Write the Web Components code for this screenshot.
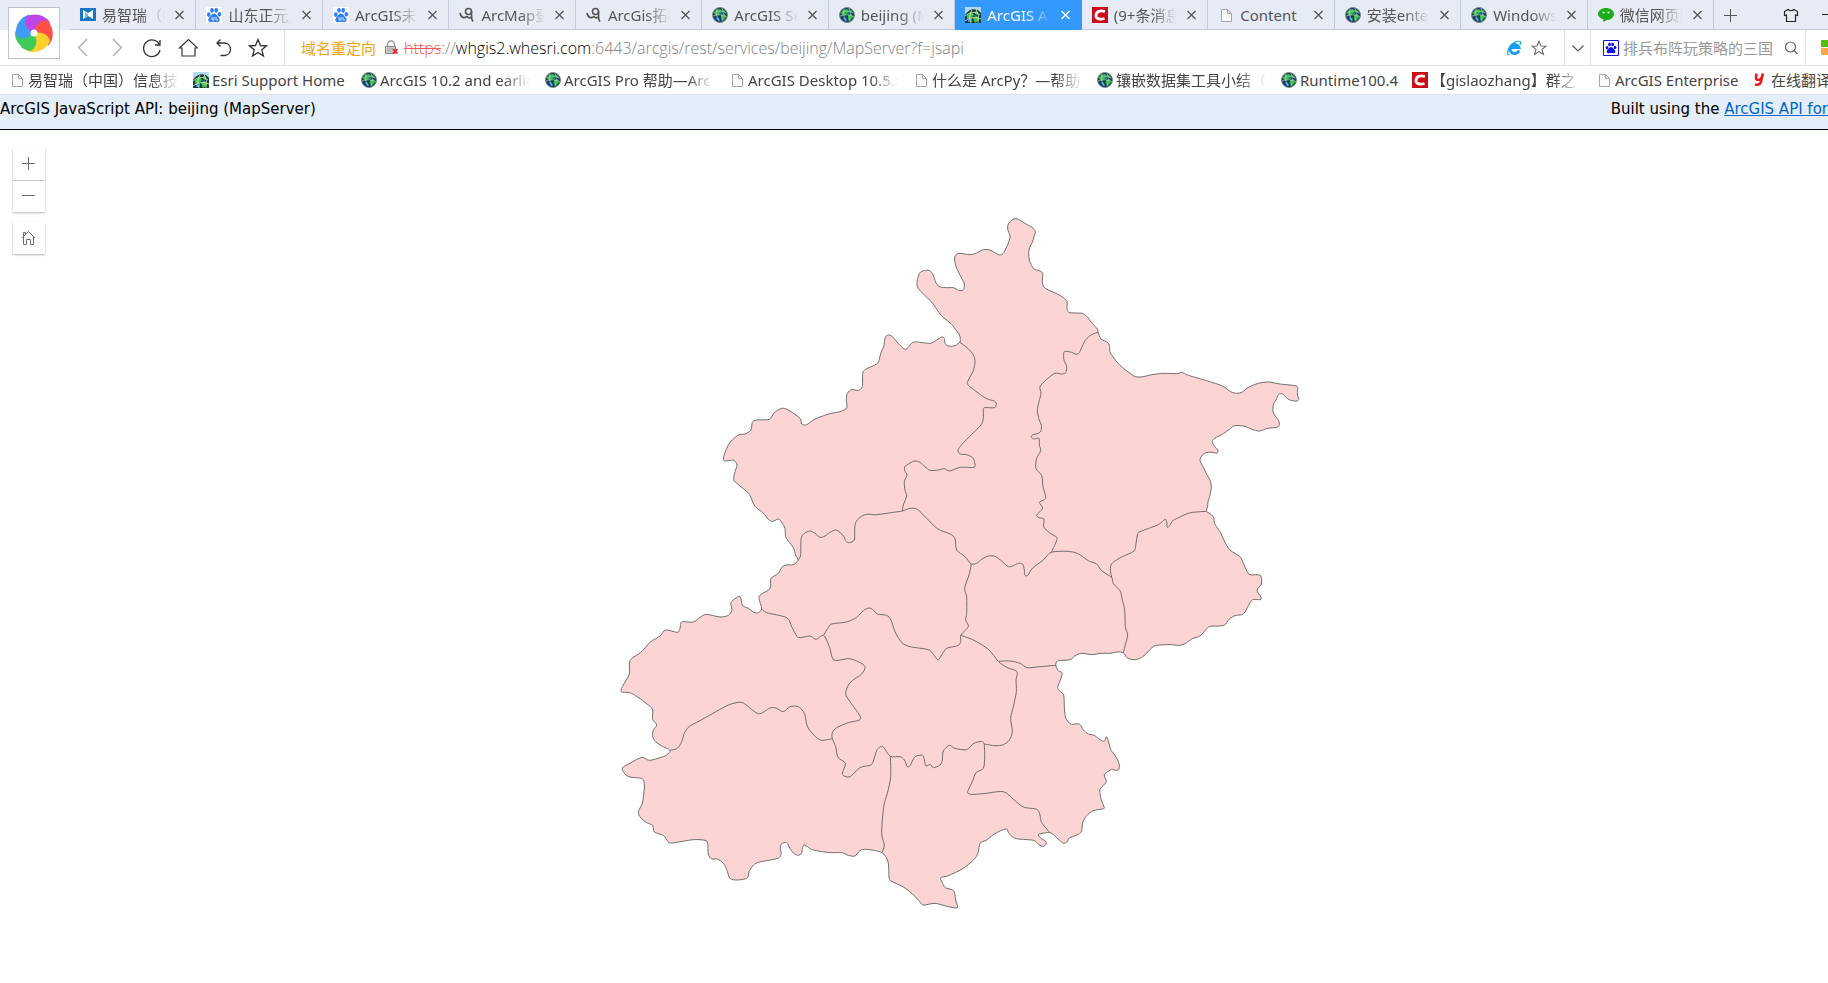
<!DOCTYPE html>
<html lang="zh-CN">
<head>
<meta charset="utf-8">
<title>ArcGIS JavaScript API: beijing (MapServer)</title>
<style>
html, body { height: 100%; margin: 0; }
body { overflow: hidden; background: #fff; }
</style>
</head>
<body>
<browser-window></browser-window>
<script>
const UI_FONT = '"Noto Sans", "Noto Sans CJK SC", sans-serif';
const define = (name, html, setup) => {
  const template = document.createElement('template');
  template.innerHTML = html;
  customElements.define(name, class extends HTMLElement {
    connectedCallback() {
      if (this.shadowRoot) return;
      const content = template.content.cloneNode(true);
      if (setup) setup(this, content);
      this.attachShadow({ mode: 'open' }).append(content);
    }
  });
};

const PAW = c => `<g fill="${c}"><ellipse cx="2.8" cy="7.6" rx="1.8" ry="2.3"/><ellipse cx="6" cy="3.2" rx="1.8" ry="2.5"/><ellipse cx="10.2" cy="3.2" rx="1.8" ry="2.5"/><ellipse cx="13.4" cy="7.2" rx="1.8" ry="2.3"/><path d="M8 6.600c2 0 2.600 1.700 4 3.100 1.800 1.700 2.200 3.300 1.200 4.600-1.300 1.500-3.300.5-5.200.5s-3.900 1-5.200-.5c-1-1.300-.6-2.900 1.200-4.600C5.400 8.300 6 6.600 8 6.600z"/></g>`;
const PETAL = 'M20 20C13 17 9 10 12 4C20-1 32 2 36 10C36 14 30 18 20 20z';
const ICONS = {
  logo: ['0 0 40 40', [[-144, '#3ecb5a'], [-72, '#3f9bf5'], [0, '#bd45ea'], [72, '#ff4f47'], [144, '#fdd02b']].map(([a, c]) =>
    `<path transform="rotate(${a} 20 20)" d="${PETAL}" fill="${c}"/>`).join('') +
    '<path transform="rotate(-144 20 20)" d="M20 20C13 17 9 10 12 4C16 1 19 1 22 1C24 8 22 14 20 20z" fill="#3ecb5a"/><circle cx="20" cy="20" r="3.500" fill="#fff"/>'],
  mlogo: ['0 0 16 16', '<path fill="#1975c5" d="M0 1h16v13H0z"/><path fill="#fff" d="M3 3l5 3 5-3v9l-5-3-5 3z"/><path fill="#6bc3ee" d="M5 5l3 2v2L5 11z"/>'],
  baidu: ['0 0 16 16', '<path fill="#fff" d="M0 0h16v16H0z"/>' + PAW('#2f80f5') + '<path d="M6 10v3h2v-3m2 0v3h2" stroke="#fff" fill="none" stroke-width=".8"/>'],
  baidubox: ['0 0 16 16', '<path fill="#fff" stroke="#1010e8" d="M.5.5h15v15H.5z"/><g transform="translate(2 2) scale(.75)">' + PAW('#1010e8') + '</g>'],
  swirl: ['0 0 16 16', '<path d="M1 6c1 5 5 6 7 3" fill="none" stroke="#555" stroke-width="1.700"/><circle cx="9.500" cy="4.500" r="3" fill="none" stroke="#555" stroke-width="1.600"/><path d="M12.500 4c.5 4-1 7.500 1.500 10.500M12.500 10c-2 1.500-4 1-4.500-1" fill="none" stroke="#555" stroke-width="1.600"/>'],
  globe: ['0 0 16 16', '<circle cx="8" cy="8" r="7.500" fill="#17405c" stroke="#7c898b"/><path d="M4 3l4-1 2 2-3 4-3 1-2-3zM9 8l4-1 1 3-3 4-2-2zM10 2l3 2 1 2-3-1z" fill="#2fba3d"/><path d="M4 10l3 1 1 3-3-1zM8 5l2 1-1 2z" fill="#2f8af0"/><path d="M2 6q6-4 12 0M1 9q7-3 14 1M5 2q-2 6 2 12M10 1q3 6 0 13" fill="none" stroke="#b9dbc8" stroke-width=".6"/>'],
  esri: ['0 0 16 16', '<path fill="#b4d9f2" d="M0 0h16v16H0z"/><path d="M0 15V8q5-8 13-5l3 3v10H0z" fill="#123e38"/><path d="M2 8l5-3 2 3-3 3-4 1zM10 4l3 1v3l-3-1zM8 11l4-2 2 4-4 3z" fill="#42c946"/><path d="M3 12l4-1v4H3zM9 8l4 1-3 1z" fill="#2895d5"/><path d="M0 9Q8 2 15 8M0 14q8-6 16-2M7 3Q3 9 6 16M11 2q4 6 2 14" fill="none" stroke="#d8e9bd" stroke-width=".8"/>'],
  csdn: ['0 0 16 16', '<path fill="#ca0c16" d="M0 0h16v16H0z"/><path d="M13 4.500C8 3 4.500 4.500 4 8s3 5 8.500 3.500" fill="none" stroke="#fff" stroke-width="2.800"/>'],
  page: ['0 0 16 16', '<path d="M3.500 2.500h6l4 4v8h-10zM9.500 2.500v4h4" fill="#fafafa" stroke="#a6a6a6"/>'],
  wechat: ['0 0 16 16', '<path fill="#1aad19" d="M8 1c4.500 0 8 2.700 8 6s-3.500 6-7 6L5 15l.5-2.500C2 11.500 0 9.500 0 7c0-3.300 3.500-6 8-6z"/><circle cx="5.500" cy="5.500" r="1.100" fill="#fff"/><circle cx="10.500" cy="5.500" r="1.100" fill="#fff"/>'],
  youdao: ['0 0 16 16', '<path d="M4.500 1.500L4 5.500Q4 8 6.500 8Q9 8 10 5L11 1.500M10.500 3L9 10Q8 13.500 3 12.500" fill="none" stroke="#e81c24" stroke-width="2.600"/>'],
  close: ['0 0 16 16', '<path d="M4.500 4l8 8M12.500 4l-8 8" fill="none" stroke="currentColor" stroke-width="1.300"/>'],
  plus: ['0 0 16 16', '<path d="M8.500 2v13M2 8.500h13" fill="none" stroke="#555"/>'],
  shirt: ['0 0 16 16', '<path d="M5 2.500L1.500 4.500v4l2-.5v6.500h9V8l2 .5v-4L11 2.500Q8 5 5 2.500z" fill="none" stroke="#222" stroke-width="1.200"/>'],
  back: ['0 0 20 20', '<path d="M14 1L5.500 9.500 14 18" fill="none" stroke="#aaa" stroke-width="1.200"/>'],
  forward: ['0 0 20 20', '<path d="M5 1l8.500 8.500L5 18" fill="none" stroke="#aaa" stroke-width="1.200"/>'],
  reload: ['0 0 20 20', '<path d="M17 2v5h-5M16.500 7A8.300 8.300 0 1 0 17 12" fill="none" stroke="#333" stroke-width="1.300"/>'],
  home: ['0 0 20 20', '<path d="M1.500 10L10.500 1.500l9 8.500h-2.500v8h-13v-8z" fill="none" stroke="#333" stroke-width="1.200"/>'],
  undo: ['0 0 20 20', '<path d="M7.500 1.500L4 5 7.500 8.500M4.500 5H12a6.300 6.300 0 0 1 0 12.500H7.500" fill="none" stroke="#333" stroke-width="1.300"/>'],
  star: ['0 0 20 20', '<path d="M10 1.500l2.500 6 6 .3-4.700 4 1.700 6.200-5.500-3.500L4.500 18l1.700-6.200-4.700-4 6-.3z" fill="none" stroke="currentColor" stroke-width="1.300"/>'],
  lock: ['0 0 16 16', '<path d="M3.500 7V4.500a3.500 3.500 0 0 1 7 0V7" fill="none" stroke="#999" stroke-width="1.500"/><path d="M1.500 6.500h10v7h-10z" fill="#ccc" stroke="#888"/><path d="M3 9h6M3 11h6" stroke="#aaa"/><path d="M9 9l4.500 4.500M13.500 9L9 13.500" stroke="#e81818" stroke-width="1.600"/>'],
  ie: ['0 0 16 16', '<path d="M12 10.500A4.600 4.600 0 1 1 12 7.500H4" fill="none" stroke="#109cf0" stroke-width="2.800"/><path d="M2.500 15Q-1 15 2 8Q7 0 13 1.500Q14 2 13 5" fill="none" stroke="#109cf0" stroke-width="1.200"/>'],
  chevron: ['0 0 16 16', '<path d="M2.500 5.500L8 11l5.500-5.500" fill="none" stroke="#555" stroke-width="1.100"/>'],
  search: ['0 0 16 16', '<circle cx="7.500" cy="7" r="5" fill="none" stroke="#666" stroke-width="1.200"/><path d="M11 10.500l3.500 3.500" stroke="#666" stroke-width="1.200"/>'],
  tiles: ['0 0 14 16', '<path fill="#55bf0d" d="M0 0h7v7H0z"/><path fill="#f9a647" d="M0 8h7v7H0z"/><path fill="#47a6f9" d="M8 0h6v7H8z"/><path fill="#f6d33b" d="M8 8h6v7H8z"/>'],
  zoomin: ['0 0 16 16', '<path d="M7.500 1v13M1 7.500h13" stroke="#6e6e6e" fill="none"/>'],
  zoomout: ['0 0 16 16', '<path d="M1 6.500h13" stroke="#6e6e6e" fill="none"/>'],
  house: ['0 0 16 16', '<path d="M1 8L7.500 1.500l6.500 6.500M2.500 7v7.500h3v-5h4v5h3V7M2.500 6V2.500h2V4" stroke="#6e6e6e" fill="none"/>']
};

define('ui-icon', `<style>:host{display:block;flex:none;width:16px;height:16px}svg{display:block;width:100%;height:100%}</style><svg aria-hidden="true"></svg>`, (host, root) => {
  const [box, body] = ICONS[host.getAttribute('name')];
  const svg = root.querySelector('svg');
  svg.setAttribute('viewBox', box);
  svg.innerHTML = body;
});

define('browser-tab', `<style>
:host{display:flex;flex:1 1 0;min-width:0;box-sizing:border-box;align-items:center;height:30px;padding:0 8px 0 10px;gap:6px;border-right:1px solid #c5cad8;border-bottom:1px solid #c5cad8;color:#555}
:host([active]){background:#3399ff;border-color:#3399ff;color:#fff}
a{flex:1 1 0;min-width:0;overflow:hidden;white-space:nowrap;color:inherit;text-decoration:none;line-height:24px;-webkit-mask-image:linear-gradient(90deg,#000 60%,transparent);mask-image:linear-gradient(90deg,#000 60%,transparent)}
:host([plain]) a{-webkit-mask-image:none;mask-image:none}
button{flex:none;width:16px;height:16px;padding:0;border:0;background:none;color:inherit}
</style><ui-icon></ui-icon><a href="#"><slot></slot></a><button aria-label="关闭"><ui-icon name="close"></ui-icon></button>`,
(host, root) => root.querySelector('ui-icon').setAttribute('name', host.getAttribute('icon')));

define('tab-strip', `<style>
:host{display:flex;height:30px;background:#e7ebf5}
nav{display:flex;flex:1;min-width:0;padding-left:70px}
.end{display:flex;flex:none;box-sizing:border-box;width:114px;align-items:center;padding-left:8px;border-bottom:1px solid #c5cad8;overflow:hidden}
button{flex:none;padding:0;border:0;background:none}
.skin{margin-left:45px}
.min{width:16px;height:1px;margin-left:23px;background:#222}
</style><nav>
<browser-tab icon="mlogo">易智瑞（中</browser-tab><browser-tab icon="baidu">山东正元_</browser-tab><browser-tab icon="baidu">ArcGIS未来</browser-tab><browser-tab icon="swirl">ArcMap登</browser-tab><browser-tab icon="swirl">ArcGis拓扑</browser-tab><browser-tab icon="globe">ArcGIS Se</browser-tab><browser-tab icon="globe">beijing (M</browser-tab><browser-tab icon="esri" active>ArcGIS A</browser-tab><browser-tab icon="csdn">(9+条消息</browser-tab><browser-tab icon="page" plain>Content</browser-tab><browser-tab icon="globe">安装enter</browser-tab><browser-tab icon="globe">Windows</browser-tab><browser-tab icon="wechat">微信网页版</browser-tab>
</nav><div class="end"><button aria-label="新标签页"><ui-icon name="plus"></ui-icon></button><button class="skin" aria-label="皮肤"><ui-icon name="shirt"></ui-icon></button><button class="min" aria-label="最小化"></button></div>`);

define('address-bar', `<style>
:host{display:flex;box-sizing:border-box;height:36px;background:#fff;border-bottom:1px solid #e2e2e2;color:#808080;overflow:hidden}
nav{display:flex;flex:none;box-sizing:border-box;width:285px;padding-left:73px;gap:15px;align-items:center;border-right:1px solid #e2e2e2}
button{display:block;flex:none;padding:0;border:0;background:none;color:#333}
nav ui-icon{width:20px;height:20px}
.url{display:flex;flex:1;min-width:0;align-items:center;padding:0 17px 0 16px;gap:8px}
.tag{color:#f0a30a;white-space:nowrap}
.text{flex:1;min-width:0;white-space:nowrap;overflow:hidden;outline:0;margin-left:-4px;font:300 16px/24px "Open Sans","Noto Sans",sans-serif}
s{color:#f55}b{font-weight:inherit;color:#000}
.fav{color:#666}
.drop{display:flex;flex:none;box-sizing:border-box;width:27px;justify-content:center;align-items:center;border:solid #e2e2e2;border-width:0 1px}
form{display:flex;flex:none;box-sizing:border-box;width:215px;align-items:center;margin:0;padding:0 6px 0 12px;gap:4px;border-right:1px solid #e2e2e2}
input{flex:1;min-width:0;border:0;padding:0;outline:0;font:inherit;background:none}
input::placeholder{color:#999;opacity:1}
.apps{flex:none;width:22px;overflow:hidden;padding-left:15px;box-sizing:border-box;align-self:center}
.apps ui-icon{width:14px}
</style><nav>
<button aria-label="后退"><ui-icon name="back"></ui-icon></button><button aria-label="前进"><ui-icon name="forward"></ui-icon></button><button aria-label="刷新"><ui-icon name="reload"></ui-icon></button><button aria-label="主页"><ui-icon name="home"></ui-icon></button><button aria-label="恢复"><ui-icon name="undo"></ui-icon></button><button aria-label="收藏"><ui-icon name="star"></ui-icon></button></nav>
<div class="url"><span class="tag">域名重定向</span><ui-icon name="lock"></ui-icon><div class="text" role="textbox" aria-label="地址"><s>https</s>://<b>whgis2.whesri.com</b>:6443/arcgis/rest/services/beijing/MapServer?f=jsapi</div><button aria-label="内核"><ui-icon name="ie"></ui-icon></button><button class="fav" aria-label="收藏此页"><ui-icon name="star"></ui-icon></button></div>
<button class="drop" aria-label="展开"><ui-icon name="chevron"></ui-icon></button>
<form><ui-icon name="baidubox"></ui-icon><input aria-label="搜索" placeholder="排兵布阵玩策略的三国"><button type="button" aria-label="搜索"><ui-icon name="search"></ui-icon></button></form>
<div class="apps"><ui-icon name="tiles"></ui-icon></div>`);

define('book-mark', `<style>
:host{display:flex;flex:none;width:184px;box-sizing:border-box;align-items:center;gap:3px;padding-right:8px;color:#444}
:host([size=m]){width:168px;padding-right:4px}:host([size=s]){width:131px;padding-right:0}:host([size=l]){width:156px;padding-right:0}
a{flex:1 1 0;min-width:0;overflow:hidden;white-space:nowrap;color:inherit;text-decoration:none;line-height:24px}
:host([fade]) a{-webkit-mask-image:linear-gradient(90deg,#000 78%,transparent 96%);mask-image:linear-gradient(90deg,#000 78%,transparent 96%)}
</style><ui-icon></ui-icon><a href="#"><slot></slot></a>`,
(host, root) => root.querySelector('ui-icon').setAttribute('name', host.getAttribute('icon')));

define('bookmarks-bar', `<style>
:host{display:flex;box-sizing:border-box;height:29px;padding-left:9px;background:#fff;border-bottom:1px solid #e2e2e2;overflow:hidden}
</style>
<book-mark icon="page" fade>易智瑞（中国）信息技</book-mark><book-mark icon="esri" size="m">Esri Support Home</book-mark><book-mark icon="globe" fade>ArcGIS 10.2 and earlie</book-mark><book-mark icon="globe" fade>ArcGIS Pro 帮助—Arc</book-mark><book-mark icon="page" fade>ArcGIS Desktop 10.5.x</book-mark><book-mark icon="page" fade>什么是 ArcPy？—帮助</book-mark><book-mark icon="globe" fade>镶嵌数据集工具小结（-</book-mark><book-mark icon="globe" size="s">Runtime100.4</book-mark><book-mark icon="csdn" fade>【gislaozhang】群之</book-mark><book-mark icon="page" size="l">ArcGIS Enterprise</book-mark><book-mark icon="youdao">在线翻译</book-mark>`);

define('page-header', `<style>
:host{display:flex;box-sizing:border-box;height:35px;justify-content:space-between;background:#e4eef8;border-bottom:1px solid #000;color:#000;font:15px/28px "DejaVu Sans",sans-serif;white-space:nowrap;overflow:hidden}
a{color:#0066cc}
</style><span>ArcGIS JavaScript API: beijing (MapServer)</span><span>Built using the <a href="#">ArcGIS API for</a></span>`);

const SHEETS = { A: [840, 200], B: [700, 320], C: [600, 500], D: [940, 480] };
const OUTLINE = [
['A', '360,426 361,415 357,402 347,389 338,376 322,362 307,350 296,336 277,309 262,293 247,279 233,262 231,248 235,228 242,216 257,211 271,213 279,225 285,241 291,254 301,261 320,263 340,263 356,271 368,271 373,262 372,248 365,235 357,219 350,205 345,188 344,173 349,163 360,160 390,164 410,159 430,149 450,150 463,157 478,165 489,161 497,147 504,132 509,117 510,105 504,92 503,78 510,65 522,57 535,58 560,73 576,82 586,95 582,110 577,127 569,142 566,160 568,180 575,197 583,208 600,213 608,221 607,245 611,260 625,270 650,281 670,293 681,305 681,325 686,337 705,339 727,340 740,349 757,370 772,387 775,398 783,417 804,428 809,443 811,458 830,485 850,505 869,519 886,530 910,530 935,524 970,520 1010,521 1027,517 1042,525 1090,539 1145,557 1172,575 1190,580 1207,576 1225,562 1255,550 1285,546 1320,552 1365,557 1373,563 1372,582 1376,598 1370,603 1352,601 1340,594 1328,582 1316,583 1308,600 1300,613 1299,635 1306,648 1316,662 1318,676 1310,682 1283,685 1258,693 1236,688 1215,679 1185,677 1168,688 1150,701 1125,714 1117,724 1122,737 1134,750 1131,759 1115,757 1098,758 1085,768 1080,782 1090,802 1100,823 1110,840 1114,860 1110,885 1104,905 1103,920 1100,934'],
['D', '820,110 824,131 841,157 853,183 870,210 900,230 910,250 920,272 930,284 961,286 964,312 951,330 963,352 960,359 938,359 925,377 915,396 905,404 885,407 867,418 852,436 812,439 800,446 780,468 757,476 735,491 718,496 690,494 650,496 635,504 612,527 595,537 577,539 560,532 550,518 530,516 510,520 480,520 457,524 425,520 405,527 390,539 355,542 348,549 348,560 355,572 366,578 364,592 358,608 353,623 360,634 371,645 373,680 376,710 385,726 395,733 418,732 430,750 445,762 463,766 478,778 490,784 495,781 498,770 503,777 512,808 522,822 533,840 538,855 536,869 525,871 515,868 493,884 499,905 481,926 480,940 484,960 491,978 491,986 460,992 440,1007 428,1028 425,1053 415,1063 388,1074 382,1085 372,1090 362,1084 350,1073 330,1058 296,1063 302,1074 317,1084 317,1094 309,1099 297,1094 280,1081 235,1077 217,1070 205,1057 200,1047 180,1053 160,1064 140,1080 120,1090 115,1115 105,1135 70,1165 25,1187'],
['C', '1022,1133 1028,1150 1036,1163 1058,1170 1064,1180 1067,1200 1072,1223 1045,1220 1005,1210 970,1215 955,1200 930,1175 905,1158 873,1143 867,1130 864,1085 846,1058 800,1048 780,1052 765,1068 745,1066 725,1058 690,1058 640,1050 625,1042 613,1035 607,1045 605,1060 593,1066 580,1059 570,1045 560,1028 545,1031 541,1045 543,1062 533,1075 475,1087 458,1098 447,1115 442,1134 412,1140 390,1135 380,1108 370,1090 352,1077 335,1077 325,1062 323,1030 315,1021 280,1019 215,1029 203,1023 190,1006 163,996 158,976 140,968 122,953 115,935 127,910 132,875 133,855 127,836 90,831 75,822 67,804 90,790 125,772 148,781 180,773 200,765 210,751 185,738 167,725 158,710 160,690 170,675 158,658 158,630 145,615 95,580 65,576 67,560 88,522 90,482 125,455 150,427 180,408 197,390 232,397 240,385 242,370 250,365 280,366 300,352 320,343 360,351 385,346 396,330 392,310 400,300 418,289 423,297 428,317 445,325 462,337 475,338 485,326 477,295 483,283 510,266 513,235 533,222 545,203 557,195 580,194'],
['B', '294,721 287,705 280,683 268,667 257,650 255,625 247,610 236,597 218,604 205,598 190,579 165,559 150,527 140,514 107,487 101,475 105,455 111,435 103,422 90,421 73,423 71,410 80,385 92,365 115,345 135,342 153,330 157,307 170,300 208,298 222,279 245,265 265,270 300,295 305,312 320,314 345,297 390,281 420,275 440,264 439,240 442,220 455,209 475,211 487,200 488,160 497,148 530,132 538,118 542,100 551,80 556,52 565,45 577,50 600,76 615,88 625,82 642,66 690,70 710,60 725,51 733,55 735,70 745,78 765,77 780,66']];
const BORDERS = [
['B', '779,67 800,82 817,100 825,122 820,152 805,180 803,193 820,208 858,235 883,243 889,253 883,263 855,263 850,268 850,295 843,315 815,343 785,374 774,390 780,402 800,404 818,413 824,428 822,442 780,442 750,453 732,446 715,450 690,451 675,440 660,427 645,423 630,429 614,441 615,454 621,465 613,485 615,510 620,528 610,555 607,573'],
['B', '294,721 302,705 303,658 312,641 330,633 345,640 360,652 375,648 390,637 407,630 420,637 432,650 438,664 448,668 463,660 464,630 467,608 480,592 500,583 530,584 580,577 607,573 630,565 652,568 680,595 712,626 750,642 765,656 770,690 795,710 813,733'],
['D', '93,253 110,250 125,238 145,228 165,229 185,243 205,260 220,257 235,250 248,252 253,270 254,285 263,286 278,264 310,240 333,217 380,214 412,220 445,242 470,252 485,272 515,293 520,311 540,332 547,360 554,390 556,440 563,465 557,490 550,518'],
['A', '775,396 755,404 738,418 727,438 718,458 708,463 695,457 675,454 671,462 672,480 680,500 677,518 665,522 645,520 620,538 600,560 603,580 597,605 592,632 597,658 604,675 603,692 595,700 577,705 574,712 583,717 597,715 598,735 602,752 590,775 588,805 605,827 609,860 617,890 612,900 598,907 608,925 590,945 597,953 612,957 611,980 628,998 650,1012 648,1027 634,1057'],
['D', '515,293 511,265 518,248 545,231 582,213 588,190 594,160 610,151 655,134 675,118 680,125 682,142 690,136 700,121 745,100 770,96 800,94'],
['C', '1114,193 1107,225 1094,265 1100,290 1100,340 1097,360 1105,380 1083,405 1082,425 1073,437 1040,445 1025,465 1014,480 1000,463 985,449 930,440 905,427 885,395 873,360 860,346 832,342 820,330 807,324 790,332 770,352 740,366 695,372 683,385 671,406'],
['C', '485,326 500,338 560,353 575,380 590,408 600,413 630,408 648,418 671,406 688,440 702,480 745,476 775,485 795,500 785,522 750,548 737,580 750,605 782,655 745,668 710,683 697,698 697,716 707,740 714,772 736,790 727,820 735,829 752,829 780,803 812,795 820,783 830,752 840,741 850,741 871,769 900,770 913,780 922,800 930,797 945,770 968,766 973,780 978,798 991,793 1000,803 1020,795 1027,780 1030,753 1048,736 1065,745 1100,749 1120,731 1145,724 1153,732'],
['C', '210,751 232,745 245,725 253,700 267,680 300,662 375,620 405,609 430,609 475,641 510,624 528,624 550,635 570,620 595,620 613,640 620,672 630,692 660,720 697,716'],
['C', '871,769 872,830 862,880 851,920 845,1000 853,1035 846,1058'],
['D', '133,792 165,797 190,794 208,780 217,755 212,715 220,680 229,635 228,600 231,575 200,562 175,544 145,508 100,480 62,466'],
['D', '175,544 210,543 240,550 262,563 300,560 348,556'],
['D', '133,792 134,830 130,865 108,878 97,905 83,935 92,943 130,941 190,935 220,958 250,981 290,988 300,1005 305,1028 330,1058']];
const points = ([sheet, list]) => list.split(' ').map(p => p.split(',').map((v, i) => SHEETS[sheet][i] + v / 3));
const curve = (p, closed) => {
  const n = p.length, at = i => closed ? p[(i + n) % n] : p[Math.max(0, Math.min(n - 1, i))];
  let d = `M${p[0]}`;
  for (let i = 0; i < (closed ? n : n - 1); i++) {
    const [a, b, c, e] = [at(i - 1), at(i), at(i + 1), at(i + 2)];
    d += `C${b.map((v, k) => v + (c[k] - a[k]) / 7)} ${c.map((v, k) => v - (e[k] - b[k]) / 7)} ${c}`;
  }
  return d + (closed ? 'Z' : '');
};

define('district-map', `<style>
:host{display:block;position:relative;flex:1;min-height:0;background:#fff;overflow:hidden}
svg.map{display:block;width:100%;height:100%}
.tools{position:absolute;left:13px;top:18px;display:flex;flex-direction:column;width:32px}
button{display:flex;justify-content:center;align-items:center;width:32px;height:32px;padding:0;border:0;background:#fff;box-shadow:0 1px 2px rgba(0,0,0,.3)}
.out{border-top:1px solid #c8c8c8}.house{margin-top:10px}
</style><svg class="map" viewBox="0 130 1828 853" role="img" aria-label="beijing"><g stroke="#6e6e6e" stroke-linejoin="round"><path class="land" fill="#fcd4d4"/><path class="lines" fill="none"/></g></svg>
<div class="tools"><button aria-label="Zoom in"><ui-icon name="zoomin"></ui-icon></button><button class="out" aria-label="Zoom out"><ui-icon name="zoomout"></ui-icon></button><button class="house" aria-label="Default map view"><ui-icon name="house"></ui-icon></button></div>`, (host, root) => {
  root.querySelector('.land').setAttribute('d', curve(OUTLINE.flatMap(points), true));
  root.querySelector('.lines').setAttribute('d', BORDERS.map(b => curve(points(b), false)).join(''));
});

define('browser-window', `<style>
:host{display:flex;flex-direction:column;height:100vh;position:relative;overflow:hidden;font:15px/24px ${UI_FONT}}
.logo{position:absolute;left:8px;top:7px;box-sizing:border-box;width:52px;height:52px;padding:5px;border:1px solid #bfc3ca;background:#fff}
.logo ui-icon{width:40px;height:40px}
tab-strip,address-bar,bookmarks-bar,page-header{flex:none}
</style><tab-strip></tab-strip><address-bar></address-bar><bookmarks-bar></bookmarks-bar><page-header></page-header><district-map></district-map><button class="logo" aria-label="菜单"><ui-icon name="logo"></ui-icon></button>`);
</script>
</body>
</html>
